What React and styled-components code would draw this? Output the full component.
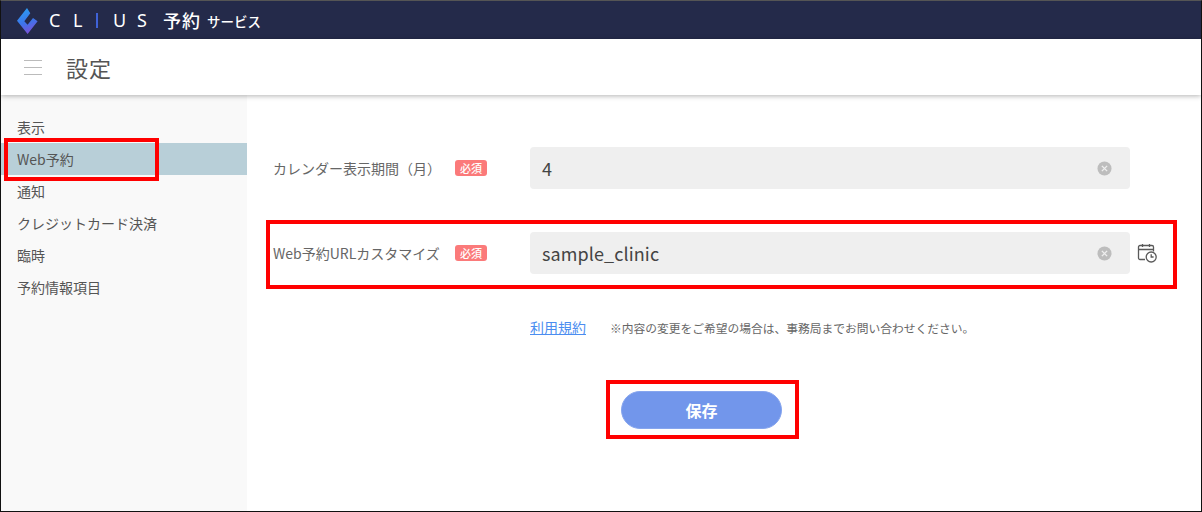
import styled, { createGlobalStyle } from 'styled-components';

const JP = `"Noto Sans CJK JP", "Noto Sans", sans-serif`;

const sideItems = ['表示', 'Web予約', '通知', 'クレジットカード決済', '臨時', '予約情報項目'];

const App = () => (
  <>
    <GlobalStyle />
    <Frame>
      <TopBar>
        <Logo viewBox="0 0 21 26">
          <defs>
            <linearGradient id="logoGrad" x1="0.3" y1="0" x2="0.6" y2="1">
              <stop offset="0" stopColor="#2a9ff2" />
              <stop offset="0.55" stopColor="#3d74ea" />
              <stop offset="1" stopColor="#7f4fd6" />
            </linearGradient>
          </defs>
          <path d="M10 0 L13.300 5.300 L7.300 13.300 L10.600 16.700 L16 10 L20.600 13.300 L10.600 26 L0 12.700 Z" fill="url(#logoGrad)" />
        </Logo>
        <Brand>
          <BrandLetter>C</BrandLetter>
          <BrandLetter>L</BrandLetter>
          <BrandBar />
          <BrandLetter>U</BrandLetter>
          <BrandLetter>S</BrandLetter>
        </Brand>
        <Service>予約</Service>
        <ServiceSub>サービス</ServiceSub>
      </TopBar>
      <TitleBar>
        <Burger>
          <span />
          <span />
          <span />
        </Burger>
        <Title>設定</Title>
      </TitleBar>
      <Body>
        <Side>
          {sideItems.map(item => (
            <SideItem key={item} $active={item === 'Web予約'}>
              {item}
            </SideItem>
          ))}
        </Side>
        <Main>
          <Row>
            <Label>カレンダー表示期間（月）</Label>
            <Badge>必須</Badge>
            <Field>
              4
              <ClearIcon />
            </Field>
          </Row>
          <Row>
            <Label>Web予約URLカスタマイズ</Label>
            <Badge>必須</Badge>
            <Field>
              sample_clinic
              <ClearIcon />
            </Field>
            <CalendarIcon viewBox="0 0 20 20">
              <path d="M8 16.500H3a1.500 1.500 0 0 1-1.500-1.500V4A1.500 1.500 0 0 1 3 2.500h12A1.500 1.500 0 0 1 16.500 4v4.500" />
              <path d="M1.500 6.500h15M5.500 1v3M12.500 1v3" />
              <circle cx="14.200" cy="14" r="5" />
              <path d="M14.200 11.200V14h2.400" />
            </CalendarIcon>
          </Row>
          <Notes>
            <TermsLink href="#">利用規約</TermsLink>
            <Note>※内容の変更をご希望の場合は、事務局までお問い合わせください。</Note>
          </Notes>
          <ButtonRow>
            <SaveButton>保存</SaveButton>
          </ButtonRow>
        </Main>
      </Body>
      <Mark $left={4} $top={138} $width={155} $height={43} />
      <Mark $left={266} $top={220} $width={911} $height={69} />
      <Mark $left={606} $top={380} $width={193} $height={59} />
    </Frame>
  </>
);

const ClearIcon = () => (
  <Clear viewBox="0 0 16 16">
    <circle cx="8" cy="8" r="7.500" fill="#bdbdbd" />
    <path d="M5.200 5.200l5.600 5.600M10.800 5.200l-5.600 5.600" stroke="#eee" strokeWidth="1.500" />
  </Clear>
);

export default App;

const GlobalStyle = createGlobalStyle`
  html, body {
    margin: 0;
    padding: 0;
    background: #fff;
  }
  body {
    font-family: ${JP};
  }
`;

const Frame = styled.div`
  border: 1px solid #111;
  border-top-color: #555;
  box-sizing: border-box;
  display: flex;
  flex-direction: column;
  height: 512px;
  overflow: hidden;
  position: relative;
  width: 1202px;
`;

const TopBar = styled.header`
  align-items: center;
  background: #242a4a;
  color: #fff;
  display: flex;
  flex: 0 0 38px;
  padding-left: 16px;
`;

const Logo = styled.svg`
  height: 26px;
  margin: 2px 11px 0 0;
  width: 21px;
`;

const Brand = styled.div`
  align-items: center;
  display: flex;
  font-family: "Noto Sans", sans-serif;
  font-size: 18px;
  gap: 14px;
  margin-right: 16px;
`;

const BrandLetter = styled.span`
  line-height: 1;
  width: 10px;
`;

const BrandBar = styled.span`
  background: #3f62d8;
  flex-shrink: 0;
  height: 15px;
  margin: 0 1px 0 -1px;
  width: 2px;
`;

const Service = styled.span`
  font-size: 18px;
  font-weight: 500;
  letter-spacing: 1px;
  margin-right: 6px;
`;

const ServiceSub = styled.span`
  font-size: 13.500px;
  font-weight: 500;
  padding-top: 1px;
`;

const TitleBar = styled.div`
  align-items: center;
  background: #fff;
  box-shadow: 0 1px 5px rgba(0, 0, 0, 0.3);
  display: flex;
  flex: 0 0 56px;
  padding-left: 23px;
  position: relative;
  z-index: 1;
`;

const Burger = styled.div`
  display: flex;
  flex-direction: column;
  gap: 6px;
  margin-right: 24px;
  span {
    background: #bbb;
    display: block;
    height: 1px;
    width: 18px;
  }
`;

const Title = styled.h1`
  color: #555;
  font-size: 22px;
  font-weight: 400;
  letter-spacing: 1px;
  margin: 0;
`;

const Body = styled.div`
  display: flex;
  flex: 1;
`;

const Side = styled.nav`
  background: #f9f9f9;
  flex: 0 0 246px;
  padding-top: 16px;
`;

const SideItem = styled.div`
  align-items: center;
  background: ${({ $active }) => ($active ? '#b8cfd8' : 'transparent')};
  box-sizing: border-box;
  color: #555;
  display: flex;
  font-size: 14px;
  height: 32px;
  padding-bottom: 1px;
  padding-left: 16px;
`;

const Main = styled.main`
  flex: 1;
  padding: 52px 0 0 26px;
`;

const Row = styled.div`
  align-items: center;
  display: flex;
  margin-bottom: 43px;
`;

const Label = styled.span`
  color: #666;
  font-size: 14px;
  white-space: nowrap;
  width: 182px;
`;

const Badge = styled.span`
  align-items: center;
  background: #fb7a7a;
  border-radius: 3px;
  color: #fff;
  display: flex;
  font-size: 11px;
  font-weight: 500;
  height: 16px;
  justify-content: center;
  margin-right: 43px;
  width: 32px;
`;

const Field = styled.div`
  align-items: center;
  background: #efefef;
  border-radius: 4px;
  box-sizing: border-box;
  color: #444;
  display: flex;
  font-family: ${JP};
  font-size: 18px;
  height: 42px;
  justify-content: space-between;
  letter-spacing: 0.100px;
  padding: 0 18px 0 12px;
  width: 600px;
`;

const Clear = styled.svg`
  height: 15px;
  width: 15px;
`;

const CalendarIcon = styled.svg`
  fill: none;
  height: 20px;
  margin-left: 7px;
  stroke: #5a5a5a;
  stroke-width: 1.300;
  width: 20px;
`;

const Notes = styled.div`
  align-items: center;
  display: flex;
  margin: 2px 0 0 257px;
`;

const TermsLink = styled.a`
  color: #4b8df0;
  font-size: 14px;
  margin-right: 24px;
  text-decoration: underline;
`;

const Note = styled.span`
  color: #666;
  font-size: 11.750px;
`;

const ButtonRow = styled.div`
  display: flex;
  margin: 54px 0 0 348px;
`;

const SaveButton = styled.button`
  background: #7296eb;
  border: 1px solid #86a5ee;
  border-radius: 19px;
  color: #fff;
  font-family: ${JP};
  font-size: 16px;
  font-weight: 700;
  height: 38px;
  width: 161px;
`;

const Mark = styled.div`
  border: 4px solid #f00;
  box-sizing: border-box;
  height: ${({ $height }) => $height}px;
  left: ${({ $left }) => $left - 1}px;
  position: absolute;
  top: ${({ $top }) => $top - 1}px;
  width: ${({ $width }) => $width}px;
  z-index: 2;
`;
